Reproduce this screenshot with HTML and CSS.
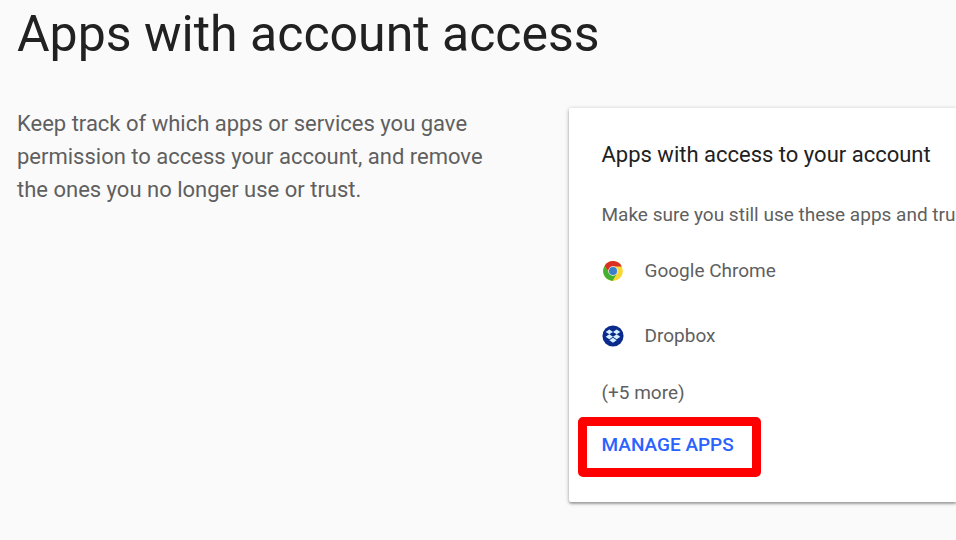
FILE: index.html
```html
<!DOCTYPE html>
<html lang="en">

<head>
    <meta charset="UTF-8" />
    <meta name="viewport" content="width=device-width, initial-scale=1.0" />
    <title>Apps with account access</title>
    <link rel="stylesheet" href="styles.css">
</head>

<body>
    <main class="page">
        <h1>Apps with account access</h1>
        <div class="columns">
            <p class="intro">Keep track of which apps or services you gave permission to access your account, and remove the ones you no longer use or trust.</p>

            <section class="card">
                <h2>Apps with access to your account</h2>
                <p class="card-text">Make sure you still use these apps and tru</p>
                <ul class="app-list">
                    <li>
                        <svg class="app-icon" viewBox="0 0 24 24" aria-hidden="true">
                            <circle cx="12" cy="12" r="10.8" fill="#fdd835" />
                            <path d="M2.9 6.2A10.8 10.8 0 0 1 21.6 7H12A5 5 0 0 0 7.3 13.7Z" fill="#dc2f24" />
                            <path d="M2.9 6.2L7.7 14.5A5 5 0 0 0 16.3 14.5L11.5 22.8A10.8 10.8 0 0 1 2.9 6.2Z" fill="#43b02f" />
                            <circle cx="12" cy="12" r="5.2" fill="#e8eef5" />
                            <circle cx="12" cy="12" r="4.4" fill="#3b7fcb" />
                        </svg>
                        <span>Google Chrome</span>
                    </li>
                    <li>
                        <svg class="app-icon" viewBox="0 0 24 24" aria-hidden="true">
                            <circle cx="12" cy="12" r="11.5" fill="#0a2a8c" />
                            <path d="M8 4.8L12 7.5L8 10.2L4 7.5ZM16 4.8L20 7.5L16 10.2L12 7.5ZM8 10.2L12 12.9L8 15.6L4 12.9ZM16 10.2L20 12.9L16 15.6L12 12.9ZM12 14L16 16.7L12 19.4L8 16.7Z" fill="#d5f1ff" />
                        </svg>
                        <span>Dropbox</span>
                    </li>
                </ul>
                <p class="more">(+5 more)</p>
                <a class="manage" href="#">MANAGE APPS</a>
            </section>
        </div>
    </main>
</body>

</html>
```
FILE: styles.css
```css
body {
    margin: 0;
    background-color: #fafafa;
    color: #5f5f5f;
    font-family: Roboto, Arial, sans-serif;
    font-size: 19px;
    line-height: 24px;
    overflow: hidden;
}

h1,
h2,
p,
ul {
    margin: 0;
    padding: 0;
    font-weight: 400;
}

.page {
    padding: 4px 0 32px 17px;
}

h1 {
    color: #212121;
    font-size: 50px;
    line-height: 60px;
}

.columns {
    display: grid;
    grid-template-columns: 50% minmax(0, 1fr);
    column-gap: 82px;
    align-items: start;
    margin-top: 43px;
}

.intro {
    font-size: 22px;
    line-height: 33px;
}

.card {
    margin-top: 1px;
    padding: 33px 0 25px 33px;
    background-color: #fff;
    border-radius: 2px 0 0 2px;
    box-shadow: 0 1px 4px rgba(0, 0, 0, 0.3), 0 2px 2px rgba(0, 0, 0, 0.2);
    white-space: nowrap;
}

h2 {
    color: #212121;
    font-size: 22px;
    line-height: 28px;
}

.card-text {
    margin-top: 34px;
}

.app-list {
    display: grid;
    gap: 41px;
    margin-top: 32px;
    list-style: none;
}

.app-list li {
    display: flex;
    align-items: center;
    gap: 21px;
}

.app-icon {
    width: 22px;
    height: 22px;
}

.more {
    margin-top: 33px;
}

/* highlighted link */
.manage {
    display: inline-block;
    margin: 12px 0 0 -24px;
    padding: 7px 18px 11px 15px;
    border: 9px solid #f00;
    border-radius: 5px;
    color: #2962ff;
    font-weight: 500;
    text-decoration: none;
}
```
